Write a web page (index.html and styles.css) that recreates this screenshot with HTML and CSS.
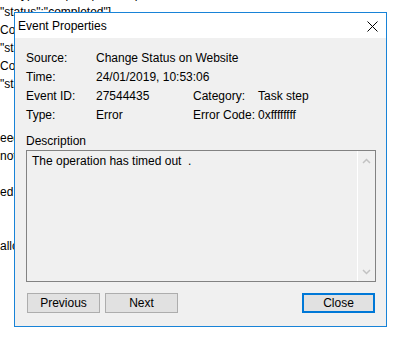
FILE: index.html
```html
<!DOCTYPE html>
<html lang="en">
<head>
    <meta charset="UTF-8">
    <title>Event Properties</title>
    <link rel="stylesheet" href="styles.css">
</head>
<body>
    <div class="backdrop">
        <div class="line">    "type":"httpRequestStep","id":27544434,</div>
        <div class="line">"status":"completed"]</div>
        <div class="line">Content-Type: application/json</div>
        <div class="line">"status":"running"</div>
        <div class="line">Content-Length: 512</div>
        <div class="line">"status":"pending"</div>
        <div class="line"></div>
        <div class="line"></div>
        <div class="line">eeded</div>
        <div class="line">not started</div>
        <div class="line"></div>
        <div class="line">ed</div>
        <div class="line"></div>
        <div class="line"></div>
        <div class="line">allowed</div>
    </div>

    <div class="dialog">
        <div class="titlebar">
            <span class="title">Event Properties</span>
            <svg class="close-x" width="11" height="11" viewBox="0 0 11 11">
                <path d="M0.5 0.5 L10.5 10.5 M10.5 0.5 L0.5 10.5" stroke="#000" stroke-width="1" fill="none"/>
            </svg>
        </div>
        <div class="content">
            <div class="props">
                <span>Source:</span><span class="wide">Change Status on Website</span>
                <span>Time:</span><span class="wide">24/01/2019, 10:53:06</span>
                <span>Event ID:</span><span>27544435</span><span>Category:</span><span>Task step</span>
                <span>Type:</span><span>Error</span><span>Error Code:</span><span>0xffffffff</span>
            </div>
            <div class="desc-label">Description</div>
            <div class="desc-box">
                <div class="desc-text">The operation has timed out&nbsp; .</div>
                <div class="scrollbar">
                    <svg width="9" height="6" viewBox="0 0 9 6"><path d="M1 5 L4.5 1.5 L8 5" stroke="#c2c2c2" stroke-width="1.5" fill="none"/></svg>
                    <svg width="9" height="6" viewBox="0 0 9 6"><path d="M1 1 L4.5 4.5 L8 1" stroke="#c2c2c2" stroke-width="1.5" fill="none"/></svg>
                </div>
            </div>
            <div class="buttons">
                <button class="btn">Previous</button>
                <button class="btn">Next</button>
                <button class="btn btn-default">Close</button>
            </div>
        </div>
    </div>
</body>
</html>
```

FILE: styles.css
```css
body {
    margin: 0;
    background: #ffffff;
    font-family: "Liberation Sans", Arial, sans-serif;
    font-size: 12px;
    color: #000000;
    position: relative;
    height: 348px;
    overflow: hidden;
}

.backdrop {
    margin-top: -15px;
}
.backdrop .line {
    height: 18px;
    line-height: 18px;
    white-space: pre;
}

.dialog {
    position: absolute;
    left: 14px;
    top: 12px;
    width: 371px;
    height: 313px;
    border: 1px solid #1883d7;
    background: #f0f0f0;
}

.titlebar {
    height: 25px;
    background: #ffffff;
    display: flex;
    align-items: center;
    justify-content: space-between;
    padding: 0 8px 0 3px;
}
.close-x {
    margin-top: 1px;
}

.content {
    padding: 11px 10px 0 11px;
}

.props {
    display: grid;
    grid-template-columns: 70px 97px 65px 1fr;
    line-height: 19px;
    white-space: nowrap;
}
.props .wide {
    grid-column: span 3;
}

.desc-label {
    margin-top: 8px;
    line-height: 16px;
    margin-bottom: 1px;
}

.desc-box {
    height: 130px;
    border: 1px solid #828282;
    display: flex;
}
.desc-text {
    flex: 1;
    padding: 2px 5px;
    line-height: 16px;
}
.scrollbar {
    width: 17px;
    border-left: 1px solid #ffffff;
    display: flex;
    flex-direction: column;
    justify-content: space-between;
    align-items: center;
    padding: 7px 0 6px;
}

.buttons {
    display: flex;
    gap: 5px;
    margin-top: 11px;
    padding: 0 1px;
}
.btn {
    width: 73px;
    height: 20px;
    border: 1px solid #adadad;
    background: #e1e1e1;
    font-family: inherit;
    font-size: 12px;
    padding: 0;
    color: #000000;
}
.btn-default {
    margin-left: auto;
    border: 2px solid #0078d7;
}
```
